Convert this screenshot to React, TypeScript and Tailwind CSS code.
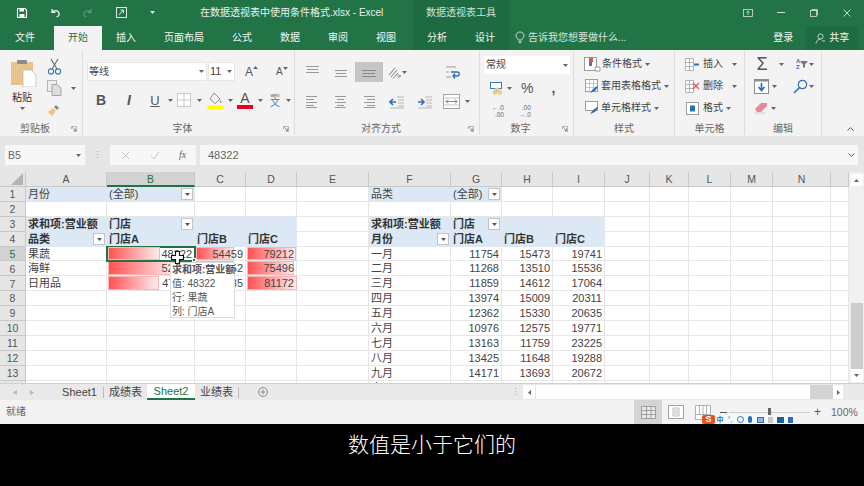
import React from "react";

const Caret = ({ c = "#666", up = false }: { c?: string; up?: boolean }) => (
  <svg width="5" height="3" viewBox="0 0 5 3" className="shrink-0">
    <path d={up ? "M0 3L2.5 0L5 3Z" : "M0 0H5L2.5 3Z"} fill={c} />
  </svg>
);

const Lines = ({ rows, c = "#9a9a9a" }: { rows: [number, number, number][]; c?: string }) => (
  <svg width="16" height="16" viewBox="0 0 16 16">
    {rows.map((r, i) => (
      <rect key={i} x={r[0]} y={r[1]} width={r[2]} height="1" fill={c} />
    ))}
  </svg>
);

const Launcher = () => (
  <svg width="6" height="6" viewBox="0 0 6 6">
    <path d="M0.5 3V0.5H5.5V5.5H3" fill="none" stroke="#9a9a9a" strokeWidth="0.7" />
    <path d="M1 1L4.5 4.5M4.5 2.5V4.5H2.5" fill="none" stroke="#777" strokeWidth="0.7" />
  </svg>
);

const Group = ({ w, label, launcher, children }: { w: string; label: string; launcher?: boolean; children: React.ReactNode }) => (
  <div className={`${w} shrink-0 flex flex-col h-[84px] mt-[1px] border-r border-[#dcdcdc]`}>
    <div className="flex-1 min-h-0">{children}</div>
    <div
      className={`h-[12px] items-center text-[10px] leading-none text-[#666] grid ${
        launcher ? "grid-cols-[1fr_auto_1fr_12px]" : "grid-cols-[1fr_auto_1fr]"
      }`}
    >
      <span />
      <span>{label}</span>
      <span />
      {launcher ? (
        <span className="flex items-center pl-[1px]">
          <Launcher />
        </span>
      ) : null}
    </div>
  </div>
);

const GridIcon = ({ children }: { children?: React.ReactNode }) => (
  <svg width="16" height="16" viewBox="0 0 16 16" className="shrink-0">
    <rect x="1.5" y="1.5" width="12" height="12" fill="#fff" stroke="#9d9d9d" />
    <path d="M1.5 5.5H13.5M1.5 9.5H13.5M5.5 1.5V13.5M9.5 1.5V13.5" stroke="#bdbdbd" strokeWidth="0.8" />
    {children}
  </svg>
);

const StyleRow = ({ icon, text }: { icon: React.ReactNode; text: string }) => (
  <div className="h-[22px] flex items-center pl-[10px]">
    {icon}
    <span className="ml-[1px] text-[10px] text-[#444] leading-none whitespace-nowrap">{text}</span>
    <span className="ml-[3px]"><Caret /></span>
  </div>
);

const CellRow = ({ icon, text, gap }: { icon: React.ReactNode; text: string; gap: string }) => (
  <div className="h-[22px] flex items-center pl-[10px]">
    {icon}
    <span className="ml-[3px] text-[10px] text-[#444] leading-none whitespace-nowrap">{text}</span>
    <span className={gap}><Caret /></span>
  </div>
);

const colNames = ["A", "B", "C", "D", "E", "F", "G", "H", "I", "J", "K", "L", "M", "N", ""];

const DropBtn = () => (
  <span className="ml-auto mr-[1px] w-[12px] h-[12px] shrink-0 bg-white border border-[#c4c4c4] flex items-center justify-center">
    <Caret c="#555" />
  </span>
);

const Bold = ({ t }: { t: string }) => <span className="font-bold text-[#333] whitespace-nowrap">{t}</span>;

const blue = new Set([
  "A1", "B1", "F1", "G1",
  "A3", "B3", "C3", "D3", "A4", "B4", "C4", "D4",
  "F3", "G3", "H3", "I3", "F4", "G4", "H4", "I4",
]);

const cellText: Record<string, React.ReactNode> = {
  A1: "月份",
  B1: <>(全部)<DropBtn /></>,
  A3: <Bold t="求和项:营业额" />,
  B3: <><Bold t="门店" /><DropBtn /></>,
  A4: <><Bold t="品类" /><DropBtn /></>,
  B4: <Bold t="门店A" />,
  C4: <Bold t="门店B" />,
  D4: <Bold t="门店C" />,
  A5: "果蔬",
  A6: "海鲜",
  A7: "日用品",
  F1: "品类",
  G1: <>(全部)<DropBtn /></>,
  F3: <Bold t="求和项:营业额" />,
  G3: <><Bold t="门店" /><DropBtn /></>,
  F4: <><Bold t="月份" /><DropBtn /></>,
  G4: <Bold t="门店A" />,
  H4: <Bold t="门店B" />,
  I4: <Bold t="门店C" />,
};

const months = ["一月", "二月", "三月", "四月", "五月", "六月", "七月", "八月", "九月", "十月"];
months.forEach((m, i) => {
  cellText[`F${i + 5}`] = m;
});

const nums: Record<string, string> = {
  B5: "48322", C5: "54459", D5: "79212",
  B6: "52106", C6: "50952", D6: "75496",
  B7: "47311", C7: "41235", D7: "81172",
  G5: "11754", H5: "15473", I5: "19741",
  G6: "11268", H6: "13510", I6: "15536",
  G7: "11859", H7: "14612", I7: "17064",
  G8: "13974", H8: "15009", I8: "20311",
  G9: "12362", H9: "15330", I9: "20635",
  G10: "10976", H10: "12575", I10: "19771",
  G11: "13163", H11: "11759", I11: "23225",
  G12: "13425", H12: "11648", I12: "19288",
  G13: "14171", H13: "13693", I13: "20672",
};

const bars: Record<string, number> = { B5: 52, B6: 66, B7: 51, C5: 38, C6: 38, C7: 38, D5: 49, D6: 47, D7: 50 };

const Tab = ({ t }: { t: string }) => <span className="text-[10px] leading-none text-[#f2f7f4] whitespace-nowrap">{t}</span>;

const Sep = () => <span className="w-[1px] h-[11px] bg-[#bbb] shrink-0" />;

export default function App() {
  const rowNums = Array.from({ length: 14 }, (_, i) => i + 1);
  return (
    <div className="w-[864px] h-[486px] overflow-hidden flex flex-col bg-black font-['Liberation_Sans','Noto_Sans_CJK_SC',sans-serif]">
      {/* title bar */}
      <div className="h-[25px] shrink-0 bg-[#227447] flex items-stretch text-[#eaf2ed]">
        <div className="w-[200px] shrink-0 flex items-center">
          <svg width="12" height="12" viewBox="0 0 12 12" className="ml-[16px]">
            <path d="M1.5 1.5H9L10.5 3V10.5H1.5Z" fill="none" stroke="#fff" strokeWidth="1.1" />
            <rect x="3.5" y="1.5" width="4.5" height="3" fill="#fff" />
            <rect x="3.5" y="7" width="5" height="3.5" fill="#fff" />
          </svg>
          <svg width="12" height="12" viewBox="0 0 12 12" className="ml-[21px]">
            <path d="M3 2V5.5H6.5M3 5.5C5 3 9 3 10 6C10.5 8 9 9.5 7.5 10" fill="none" stroke="#fff" strokeWidth="1.2" />
          </svg>
          <svg width="12" height="12" viewBox="0 0 12 12" className="ml-[21px] opacity-30">
            <path d="M9 2V5.5H5.5M9 5.5C7 3 3 3 2 6C1.5 8 3 9.5 4.5 10" fill="none" stroke="#fff" strokeWidth="1.1" />
          </svg>
          <svg width="13" height="13" viewBox="0 0 13 13" className="ml-[21px]">
            <rect x="1.5" y="1.5" width="10" height="10" fill="none" stroke="#dfe9e3" strokeWidth="1" />
            <path d="M4 9L8.5 4M5.5 4H8.5V7" fill="none" stroke="#dfe9e3" strokeWidth="1" />
          </svg>
          <span className="ml-[22px]"><Caret c="#dfe9e3" /></span>
        </div>
        <div className="w-[213px] shrink-0 flex items-center text-[10px] leading-none whitespace-nowrap">在数据透视表中使用条件格式.xlsx - Excel</div>
        <div className="w-[96px] shrink-0 bg-[#1f6b41] flex items-center justify-center text-[10px] text-[#cfe0d6] leading-none">数据透视表工具</div>
        <div className="flex-1 flex items-center">
          <svg width="10" height="8" viewBox="0 0 10 8" className="ml-[234px]">
            <rect x="0.5" y="0.5" width="9" height="7" fill="none" stroke="#d5e2da" strokeWidth="0.8" />
            <path d="M5 2V6M3.5 3.5L5 2L6.5 3.5" fill="none" stroke="#d5e2da" strokeWidth="0.8" />
          </svg>
          <svg width="8" height="2" viewBox="0 0 8 2" className="ml-[24px]"><rect width="8" height="1" fill="#d5e2da" /></svg>
          <svg width="8" height="8" viewBox="0 0 8 8" className="ml-[25px]">
            <rect x="0.5" y="1.5" width="6" height="6" fill="none" stroke="#d5e2da" strokeWidth="0.8" />
            <path d="M2 1V0.5H7.5V6H7" fill="none" stroke="#d5e2da" strokeWidth="0.8" />
          </svg>
          <svg width="8" height="8" viewBox="0 0 8 8" className="ml-[25px]">
            <path d="M0.5 0.5L7.5 7.5M7.5 0.5L0.5 7.5" stroke="#d5e2da" strokeWidth="0.9" />
          </svg>
        </div>
      </div>
      {/* tabs */}
      <div className="h-[25px] shrink-0 bg-[#227447] flex items-stretch">
        <div className="flex items-center gap-[28px] pl-[15px] w-[413px] shrink-0">
          <Tab t="文件" />
          <div className="-ml-[9px] -mr-[14px] w-[48px] h-[24px] self-end bg-[#f3f3f3] flex items-center justify-center text-[10px] text-[#217346] leading-none">开始</div>
          <Tab t="插入" />
          <Tab t="页面布局" />
          <Tab t="公式" />
          <Tab t="数据" />
          <Tab t="审阅" />
          <Tab t="视图" />
        </div>
        <div className="w-[96px] shrink-0 bg-[#1f6b41] flex items-center justify-center gap-[28px]">
          <Tab t="分析" />
          <Tab t="设计" />
        </div>
        <div className="flex-1 flex items-center">
          <svg width="10" height="13" viewBox="0 0 10 13" className="ml-[6px]">
            <path d="M3.3 9C3 7.5 1 6.8 1 4.6C1 2.5 2.8 1 5 1S9 2.5 9 4.6C9 6.8 7 7.5 6.7 9ZM3.5 10.5H6.5M4 12H6" fill="none" stroke="#e4eee8" strokeWidth="0.8" />
          </svg>
          <span className="ml-[3px] text-[10px] leading-none text-[#d5e4db] whitespace-nowrap">告诉我您想要做什么...</span>
          <span className="ml-[147px] flex items-center"><Tab t="登录" /></span>
          <div className="ml-[13px] w-[52px] h-[24px] self-end bg-[#1f6b41] flex items-center justify-center gap-[4px]">
            <svg width="10" height="11" viewBox="0 0 10 11">
              <circle cx="5.5" cy="3.5" r="2.6" fill="none" stroke="#e4eee8" strokeWidth="0.8" />
              <path d="M1 10.5C1.3 8 3 6.2 5.5 6.2M7 8H10" fill="none" stroke="#e4eee8" strokeWidth="0.8" />
            </svg>
            <Tab t="共享" />
          </div>
        </div>
      </div>
      {/* ribbon */}
      <div className="h-[86px] shrink-0 bg-[#f3f3f3] flex items-start">
        <Group w="w-[83px]" label="剪贴板" launcher>
          <div className="flex">
            <div className="w-[44px] flex flex-col items-center pt-[8px]">
              <svg width="28" height="28" viewBox="0 0 28 28" className="ml-[4px]">
                <rect x="1" y="3" width="22" height="23" fill="#e7c48c" />
                <rect x="7" y="1" width="10" height="4" rx="1" fill="#8b8b8b" />
                <path d="M13 11H21L26 16V28H13Z" fill="#fff" stroke="#b5b5b5" strokeWidth="0.7" />
              </svg>
              <span className="mt-[4px] text-[10px] leading-[14px] text-[#333]">粘贴</span>
              <span className="mt-[2px]"><Caret /></span>
            </div>
            <div className="pt-[4px] flex flex-col">
              <div className="h-[22px] flex items-center ml-[3px]">
                <svg width="15" height="17" viewBox="0 0 15 17">
                  <path d="M4 1L10 11M11 1L5 11" stroke="#6a6a6a" strokeWidth="1.1" />
                  <circle cx="4" cy="13.5" r="2.6" fill="none" stroke="#3f78b8" strokeWidth="1.1" />
                  <circle cx="11" cy="13.5" r="2.6" fill="none" stroke="#3f78b8" strokeWidth="1.1" />
                </svg>
              </div>
              <div className="h-[22px] flex items-center ml-[3px]">
                <svg width="15" height="16" viewBox="0 0 15 16">
                  <rect x="0.5" y="0.5" width="9" height="11" fill="#eee" stroke="#b5b5b5" />
                  <path d="M5 4.5H10L14 8V15.5H5Z" fill="#ddd" stroke="#a5a5a5" />
                </svg>
                <span className="ml-[9px]"><Caret /></span>
              </div>
              <div className="h-[22px] flex items-center ml-[3px]">
                <svg width="14" height="14" viewBox="0 0 14 14">
                  <path d="M1 9L6 5L9 8L5 13Z" fill="#eec37a" />
                  <path d="M7 4L9 2L12 5L10 7Z" fill="#8a8a8a" />
                </svg>
              </div>
            </div>
          </div>
        </Group>
        <Group w="w-[212px]" label="字体" launcher>
          <div className="mt-[11px] ml-[4px] flex items-center h-[19px]">
            <div className="w-[120px] h-[19px] bg-white flex items-center pr-[2px] border border-[#e6e6e6]">
              <span className="text-[10px] text-[#444] pl-[1px] leading-none">等线</span>
              <span className="ml-auto"><Caret /></span>
            </div>
            <div className="ml-[1px] w-[27px] h-[19px] bg-white flex items-center pr-[2px] border border-[#e6e6e6]">
              <span className="text-[11px] text-[#444] pl-[1px] leading-none">11</span>
              <span className="ml-auto"><Caret /></span>
            </div>
            <span className="ml-[10px] flex items-start text-[#555] text-[12px] leading-none">A<Caret up /></span>
            <span className="ml-[18px] flex items-start text-[#555] text-[10px] leading-none">A<Caret /></span>
          </div>
          <div className="mt-[8px] ml-[4px] flex items-center h-[22px]">
            <span className="w-[28px] text-center text-[14px] font-bold text-[#555] leading-none">B</span>
            <span className="w-[28px] text-center text-[14px] font-bold italic text-[#555] leading-none">I</span>
            <span className="w-[24px] text-center text-[13px] text-[#555] underline leading-none">U</span>
            <span className="w-[6px] flex justify-center"><Caret /></span>
            <span className="w-[22px] flex justify-center">
              <svg width="14" height="14" viewBox="0 0 14 14">
                <rect x="0.5" y="0.5" width="13" height="13" fill="#fff" stroke="#c9c9c9" />
                <path d="M7 0.5V13.5M0.5 7H13.5" stroke="#c9c9c9" />
              </svg>
            </span>
            <span className="w-[8px] flex justify-center"><Caret /></span>
            <span className="w-[24px] flex justify-center">
              <svg width="17" height="17" viewBox="0 0 17 17">
                <path d="M7 1L13 7L8 11.5L3 7Z" fill="#f4f4f4" stroke="#8d8d8d" />
                <path d="M13.5 8C14.5 9.5 14.5 11 13.5 11S12.5 9.5 13.5 8Z" fill="#8d8d8d" />
                <rect x="0.5" y="13.5" width="16" height="3.5" fill="#ffff00" />
              </svg>
            </span>
            <span className="w-[6px] flex justify-center"><Caret /></span>
            <span className="w-[24px] flex flex-col items-center">
              <span className="text-[14px] leading-[12px] text-[#555]">A</span>
              <span className="mt-[1px] w-[16px] h-[4px] bg-[#e8001c]" />
            </span>
            <span className="w-[6px] flex justify-center"><Caret /></span>
            <span className="w-[24px] flex flex-col items-center leading-none">
              <span className="text-[5px] text-[#555]">wén</span>
              <span className="text-[10px] text-[#4a7fb8]">文</span>
            </span>
            <span className="w-[3px] flex justify-center"><Caret /></span>
          </div>
        </Group>
        <Group w="w-[185px]" label="对齐方式" launcher>
          <div className="flex pl-[4px]">
            <div className="w-[140px] flex flex-col">
              <div className="mt-[11px] flex items-center h-[20px]">
                <span className="w-[28px] flex justify-center"><Lines rows={[[1, 2, 13], [2, 5, 11], [1, 8, 13]]} /></span>
                <span className="w-[28px] flex justify-center"><Lines rows={[[2, 6, 12], [3, 9, 10], [2, 12, 12]]} /></span>
                <span className="w-[28px] h-[20px] bg-[#c6c6c6] flex justify-center items-center"><Lines c="#8a8a8a" rows={[[1, 6, 14], [2, 9, 12], [1, 12, 14]]} /></span>
                <span className="w-[28px] flex items-center justify-center gap-[1px]">
                  <svg width="13" height="13" viewBox="0 0 13 13">
                    <path d="M1 9L7 2M3 11L9 4M5 12.5L10 7" stroke="#777" strokeWidth="1" />
                    <path d="M9 10H12.5M11 8.5L12.5 10L11 11.5" fill="none" stroke="#4a7fb8" strokeWidth="0.8" />
                  </svg>
                  <Caret />
                </span>
              </div>
              <div className="mt-[10px] flex items-center h-[20px]">
                <span className="w-[28px] flex justify-center"><Lines rows={[[1, 2, 11], [1, 5, 8], [1, 8, 11], [1, 11, 8], [1, 13, 11]]} /></span>
                <span className="w-[28px] flex justify-center"><Lines rows={[[2, 2, 11], [4, 5, 7], [2, 8, 11], [4, 11, 7], [2, 13, 11]]} /></span>
                <span className="w-[28px] flex justify-center"><Lines rows={[[3, 2, 11], [6, 5, 8], [3, 8, 11], [6, 11, 8], [3, 13, 11]]} /></span>
                <span className="w-[28px] flex justify-center">
                  <svg width="16" height="14" viewBox="0 0 16 14">
                    <path d="M7 7H1M4 4L1 7L4 10" fill="none" stroke="#2f6fb5" strokeWidth="1.6" />
                    <path d="M8 2H15M9 5H15M9 8H15M9 11H15M1 13H15" stroke="#a5a5a5" strokeWidth="0.8" />
                  </svg>
                </span>
                <span className="w-[28px] flex justify-center">
                  <svg width="16" height="14" viewBox="0 0 16 14">
                    <path d="M1 7H7M4 4L7 7L4 10" fill="none" stroke="#2f6fb5" strokeWidth="1.6" />
                    <path d="M8 2H15M9 5H15M9 8H15M9 11H15M1 13H15" stroke="#a5a5a5" strokeWidth="0.8" />
                  </svg>
                </span>
              </div>
            </div>
            <div className="flex flex-col">
              <div className="h-[22px] mt-[10px] flex items-center pl-[6px]">
                <svg width="16" height="16" viewBox="0 0 16 16">
                  <path d="M1 3H11M1 8H4M1 13H6" stroke="#9a9a9a" strokeWidth="1.2" />
                  <path d="M6 8H12C15 8 15 12 12 12H8M10 9.5L8 12L10 14.5" fill="none" stroke="#2f6fb5" strokeWidth="1.3" />
                </svg>
              </div>
              <div className="h-[20px] mt-[8px] flex items-center pl-[4px]">
                <svg width="17" height="15" viewBox="0 0 17 15">
                  <rect x="0.5" y="0.5" width="16" height="14" fill="#fff" stroke="#a5a5a5" />
                  <path d="M0.5 4H16.5M0.5 11H16.5" stroke="#c4c4c4" />
                  <path d="M3 7.5H14M5 5.5L3 7.5L5 9.5M12 5.5L14 7.5L12 9.5" fill="none" stroke="#2f6fb5" strokeWidth="0.8" />
                </svg>
                <span className="ml-[5px]"><Caret /></span>
              </div>
            </div>
          </div>
        </Group>
        <Group w="w-[94px]" label="数字" launcher>
          <div className="ml-[4px] mt-[5px] w-[86px] h-[18px] bg-white flex items-center pr-[2px]">
            <span className="text-[10px] pl-[2px] text-[#444] leading-none">常规</span>
            <span className="ml-auto"><Caret /></span>
          </div>
          <div className="mt-[3px] h-[22px] flex items-center pl-[10px]">
            <svg width="14" height="14" viewBox="0 0 14 14">
              <rect x="0.5" y="1.5" width="11" height="6" fill="#fff" stroke="#3d79bb" />
              <circle cx="7" cy="9" r="2.4" fill="#e5c48e" />
              <circle cx="10" cy="11.5" r="2.4" fill="#eccf9f" />
              <circle cx="5" cy="11.5" r="2.2" fill="#e5c48e" />
            </svg>
            <span className="ml-[3px]"><Caret /></span>
            <span className="ml-[9px] text-[14px] leading-none text-[#555]">%</span>
            <span className="ml-[18px] text-[14px] font-bold leading-none text-[#555]">,</span>
          </div>
          <div className="mt-[1px] h-[22px] flex items-center pl-[12px] gap-[15px]">
            <span className="flex flex-col items-end text-[6.5px] leading-[7px] text-[#666]">
              <span><span className="text-[#2f6fb5]">←</span>.0</span>
              <span>.00</span>
            </span>
            <span className="flex flex-col items-end text-[6.5px] leading-[7px] text-[#666]">
              <span>.00</span>
              <span><span className="text-[#2f6fb5]">→</span>.0</span>
            </span>
          </div>
        </Group>
        <Group w="w-[101px]" label="样式">
          <div className="pt-[2px]">
            <StyleRow
              text="条件格式"
              icon={
                <svg width="17" height="16" viewBox="0 0 17 16" className="shrink-0">
                  <rect x="0.5" y="1.5" width="12" height="13" fill="#fff" stroke="#9d9d9d" />
                  <rect x="5" y="2" width="4" height="4" fill="#d9534f" />
                  <rect x="5" y="6" width="3" height="4" fill="#3d79bb" />
                  <path d="M11 11H16V15H11Z" fill="#fff" stroke="#777" strokeWidth="0.7" />
                </svg>
              }
            />
            <StyleRow
              text="套用表格格式"
              icon={
                <GridIcon>
                  <path d="M6 15L9 11L13 8L14 9L11 13Z" fill="#2f6fb5" />
                </GridIcon>
              }
            />
            <StyleRow
              text="单元格样式"
              icon={
                <svg width="16" height="16" viewBox="0 0 16 16" className="shrink-0">
                  <rect x="1.5" y="1.5" width="12" height="9" fill="#fff" stroke="#9d9d9d" />
                  <path d="M6 14L9 10L13 7L14 8L11 12Z" fill="#2f6fb5" />
                </svg>
              }
            />
          </div>
        </Group>
        <Group w="w-[70px]" label="单元格">
          <div className="pt-[2px]">
            <CellRow
              text="插入"
              gap="ml-[9px]"
              icon={
                <svg width="15" height="15" viewBox="0 0 15 15" className="shrink-0">
                  <path d="M0.5 1.5H8.5V13.5H0.5ZM0.5 5.5H8.5M0.5 9.5H8.5M4.5 1.5V13.5" fill="#fff" stroke="#a5a5a5" strokeWidth="0.8" />
                  <path d="M9 7.5H14" stroke="#2f6fb5" strokeWidth="2" />
                </svg>
              }
            />
            <CellRow
              text="删除"
              gap="ml-[9px]"
              icon={
                <svg width="15" height="15" viewBox="0 0 15 15" className="shrink-0">
                  <path d="M0.5 1.5H8.5V13.5H0.5ZM0.5 5.5H8.5M0.5 9.5H8.5M4.5 1.5V13.5" fill="#fff" stroke="#a5a5a5" strokeWidth="0.8" />
                  <path d="M8 4L14 10M14 4L8 10" stroke="#d9534f" strokeWidth="1.1" />
                </svg>
              }
            />
            <CellRow
              text="格式"
              gap="ml-[3px]"
              icon={
                <svg width="15" height="15" viewBox="0 0 15 15" className="shrink-0">
                  <rect x="1.5" y="1.5" width="12" height="12" fill="#fff" stroke="#9d9d9d" />
                  <rect x="5" y="4.5" width="5" height="6" fill="#2f6fb5" />
                </svg>
              }
            />
          </div>
        </Group>
        <Group w="w-[77px]" label="编辑">
          <div className="pt-[2px] pl-[9px]">
            <div className="h-[22px] flex items-center">
              <span className="w-[16px] text-[18px] leading-none text-[#555] text-center">Σ</span>
              <span className="ml-[9px]"><Caret /></span>
              <span className="ml-[12px] flex flex-col text-[6px] leading-[6px] text-[#2f6fb5] font-bold"><span>A</span><span>Z</span></span>
              <svg width="8" height="8" viewBox="0 0 8 8"><path d="M0 1H8L5 4.5V7.5H3V4.5Z" fill="#777" /></svg>
              <span className="ml-[1px]"><Caret /></span>
            </div>
            <div className="h-[22px] flex items-center">
              <svg width="15" height="15" viewBox="0 0 15 15">
                <rect x="0.5" y="0.5" width="14" height="14" fill="#fff" stroke="#8d8d8d" />
                <rect x="0.5" y="0.5" width="14" height="2" fill="#8d8d8d" />
                <path d="M7.5 4V11M4.5 8L7.5 11.5L10.5 8" fill="none" stroke="#2f6fb5" strokeWidth="1.7" />
              </svg>
              <span className="ml-[3px]"><Caret /></span>
              <svg width="15" height="15" viewBox="0 0 15 15" className="ml-[16px]">
                <circle cx="9.5" cy="5.5" r="4.2" fill="none" stroke="#2f6fb5" strokeWidth="1.2" />
                <path d="M6.5 8.5L1 14" stroke="#2f6fb5" strokeWidth="1.6" />
              </svg>
              <span className="ml-[1px]"><Caret /></span>
            </div>
            <div className="h-[22px] flex items-center">
              <svg width="14" height="12" viewBox="0 0 14 12">
                <path d="M1 7L7 1H13V4L7 10H3Z" fill="#e8899a" />
                <path d="M1 11H11" stroke="#bbb" strokeWidth="0.7" />
              </svg>
              <span className="ml-[3px]"><Caret /></span>
            </div>
          </div>
        </Group>
        <div className="flex-1 h-[84px] flex items-end justify-end pr-[10px] pb-[3px]">
          <svg width="7" height="4" viewBox="0 0 7 4"><path d="M0.5 3.5L3.5 0.7L6.5 3.5" fill="none" stroke="#555" strokeWidth="1" /></svg>
        </div>
      </div>
      {/* formula bar */}
      <div className="h-[36px] shrink-0 bg-[#e6e6e6] pt-[9px]">
        <div className="h-[20px] flex items-stretch">
          <div className="ml-[5px] w-[80px] bg-[#f7f7f7] flex items-center pl-[3px] pr-[4px]">
            <span className="text-[10.5px] text-[#666] leading-none">B5</span>
            <span className="ml-auto"><Caret /></span>
          </div>
          <div className="w-[25px] flex items-center justify-center text-[9px] leading-none text-[#999]">⋮</div>
          <div className="w-[86px] bg-[#f7f7f7] flex items-center">
            <svg width="9" height="9" viewBox="0 0 9 9" className="ml-[11px]"><path d="M1 1L8 8M8 1L1 8" stroke="#c2c2c2" strokeWidth="1" /></svg>
            <svg width="10" height="9" viewBox="0 0 10 9" className="ml-[20px]"><path d="M1 5L4 8L9 1" fill="none" stroke="#c2c2c2" strokeWidth="1" /></svg>
            <span className="ml-[19px] text-[10px] italic text-[#666] font-['Liberation_Serif',serif] leading-none">fx</span>
          </div>
          <div className="ml-[4px] w-[658px] bg-[#f7f7f7] flex items-center pl-[8px] pr-[3px]">
            <span className="text-[11px] text-[#666] leading-none">48322</span>
            <svg width="7" height="4" viewBox="0 0 7 4" className="ml-auto"><path d="M0.5 0.5L3.5 3.3L6.5 0.5" fill="none" stroke="#555" strokeWidth="1" /></svg>
          </div>
        </div>
      </div>
      {/* sheet */}
      <div className="h-[211px] shrink-0 flex bg-white">
        <div className="relative w-[849px] h-[211px] overflow-hidden">
          <div className="grid grid-cols-[26px_81px_88px_51px_51px_72px_82px_51px_51px_52px_45px_39px_42px_42px_58px_18px] grid-rows-[15px] auto-rows-[14.9px]">
            <div className="bg-[#e6e6e6] border-r border-b border-[#c8c8c8] flex items-end justify-end pr-[2px] pb-[1px]">
              <svg width="12" height="12" viewBox="0 0 12 12"><path d="M12 0V12H0Z" fill="#b4b4b4" /></svg>
            </div>
            {colNames.map((c, i) => (
              <div
                key={i}
                className={
                  c === "B"
                    ? "bg-[#d2d2d2] border-b-2 border-b-[#217346] border-r border-r-[#c8c8c8] flex items-center justify-center pt-[1px] text-[10.5px] leading-none text-[#217346]"
                    : "bg-[#e6e6e6] border-r border-b border-[#c8c8c8] flex items-center justify-center pt-[1px] text-[10.5px] leading-none text-[#555]"
                }
              >
                {c}
              </div>
            ))}
            {rowNums.map((r) => (
              <React.Fragment key={r}>
                <div
                  className={
                    r === 5
                      ? "bg-[#d2d2d2] border-r border-b border-[#c8c8c8] flex items-center justify-center pt-[1px] text-[10.5px] leading-none text-[#217346]"
                      : "bg-[#e6e6e6] border-r border-b border-[#c8c8c8] flex items-center justify-center pt-[1px] text-[10.5px] leading-none text-[#555]"
                  }
                >
                  {r}
                </div>
                {colNames.map((c, i) => {
                  const key = `${c}${r}`;
                  const isBlue = blue.has(key);
                  const isSel = key === "B5";
                  const num = nums[key];
                  const bar = bars[key];
                  return (
                    <div
                      key={i}
                      className={`relative flex items-center pt-[1px] text-[11px] leading-none text-[#444] min-w-0 border-r border-b ${
                        isBlue ? "bg-[#dce9f5] border-[#dce9f5]" : "border-[#e6e6e6]"
                      } ${num ? "justify-end pr-[2px]" : "pl-[2px]"} ${isSel ? "outline-2 -outline-offset-1 outline-[#217346] z-10" : ""}`}
                    >
                      {bar ? (
                        <span
                          className="absolute left-[1px] top-0 bottom-0 border border-[#f7b5b5] bg-[linear-gradient(90deg,#ff5252,#ffecec)]"
                          style={{ width: bar }}
                        />
                      ) : null}
                      {num ? <span className="relative">{num}</span> : cellText[key]}
                      {isSel ? <span className="absolute -right-[2px] -bottom-[2px] w-[4px] h-[4px] bg-[#217346] border border-white" /> : null}
                    </div>
                  );
                })}
              </React.Fragment>
            ))}
          </div>
          {/* tooltip */}
          <div className="absolute z-20 left-[170px] top-[90px] w-[65px] h-[56px] bg-white border border-[#dcdcdc] text-[10px] leading-[14px] text-[#555] whitespace-nowrap pl-[1px]">
            <div className="font-bold text-[#555]">求和项:营业额</div>
            <div>值: 48322</div>
            <div>行: 果蔬</div>
            <div>列: 门店A</div>
          </div>
          {/* cursor */}
          <svg width="13" height="13" viewBox="0 0 13 13" className="absolute z-30 left-[171px] top-[79px]">
            <path d="M4.5 0.5H8.5V4.5H12.5V8.5H8.5V12.5H4.5V8.5H0.5V4.5H4.5Z" fill="#fff" stroke="#111" strokeWidth="1.2" />
          </svg>
        </div>
        <div className="w-[15px] h-[211px] bg-[#f0f0f0] flex flex-col items-center">
          <div className="mt-[2px] w-[12px] h-[12px] bg-white flex items-center justify-center"><Caret up /></div>
          <div className="flex-1 w-[12px] mt-[1px] flex flex-col justify-end">
            <div className="h-[66px] bg-[#cdcdcd]" />
          </div>
          <div className="w-[12px] h-[13px] mb-[1px] bg-white flex items-center justify-center"><Caret /></div>
        </div>
      </div>
      {/* sheet tabs */}
      <div className="h-[17px] shrink-0 bg-[#e9e9e9] border-t border-[#d0d0d0] flex items-center">
        <span className="ml-[13px]"><svg width="4" height="5" viewBox="0 0 4 5"><path d="M4 0V5L0 2.5Z" fill="#b8b8b8" /></svg></span>
        <span className="ml-[13px]"><svg width="4" height="5" viewBox="0 0 4 5"><path d="M0 0V5L4 2.5Z" fill="#b8b8b8" /></svg></span>
        <span className="ml-[22px]"><Sep /></span>
        <span className="w-[47px] text-center text-[11px] leading-none text-[#444]">Sheet1</span>
        <Sep />
        <span className="w-[43px] text-center text-[11px] leading-none text-[#444]">成绩表</span>
        <span className="w-[48px] h-[16px] self-start bg-white border-b-2 border-[#217346] flex items-center justify-center text-[11px] leading-none text-[#217346]">Sheet2</span>
        <span className="w-[43px] text-center text-[11px] leading-none text-[#444]">业绩表</span>
        <Sep />
        <svg width="10" height="10" viewBox="0 0 10 10" className="ml-[19px] shrink-0">
          <circle cx="5" cy="5" r="4.5" fill="none" stroke="#777" strokeWidth="0.8" />
          <path d="M5 2.5V7.5M2.5 5H7.5" stroke="#777" strokeWidth="0.8" />
        </svg>
        <span className="ml-[245px] w-[4px] shrink-0 flex justify-center text-[9px] leading-none text-[#aaa]">⋮</span>
        <div className="ml-[6px] w-[12px] h-[14px] shrink-0 bg-white flex items-center justify-center">
          <svg width="3" height="5" viewBox="0 0 3 5"><path d="M3 0V5L0 2.5Z" fill="#666" /></svg>
        </div>
        <div className="ml-[1px] w-[274px] h-[14px] shrink-0 bg-white" />
        <div className="w-[23px] h-[14px] shrink-0 bg-[#d4d4d4]" />
        <div className="w-[10px] h-[14px] shrink-0 bg-white flex items-center justify-center">
          <svg width="3" height="5" viewBox="0 0 3 5"><path d="M0 0V5L3 2.5Z" fill="#666" /></svg>
        </div>
      </div>
      {/* status */}
      <div className="h-[24px] shrink-0 bg-[#f3f3f3] flex items-stretch">
        <span className="ml-[6px] w-[21px] shrink-0 self-center text-[10px] leading-none text-[#666]">就绪</span>
        <div className="ml-[607px] w-[28px] shrink-0 bg-[#d4d4d4] flex items-center justify-center">
          <svg width="15" height="13" viewBox="0 0 15 13">
            <path d="M0.5 0.5H14.5V12.5H0.5ZM0.5 4.5H14.5M0.5 8.5H14.5M5.5 0.5V12.5M10 0.5V12.5" fill="#e8e8e8" stroke="#8f8f8f" strokeWidth="0.8" />
          </svg>
        </div>
        <div className="ml-[6px] w-[16px] shrink-0 flex items-center">
          <svg width="16" height="14" viewBox="0 0 16 14">
            <rect x="0.5" y="0.5" width="15" height="13" fill="#fff" stroke="#a0a0a0" />
            <path d="M5 3H11V11H5ZM6 5H10M6 7H10M6 9H10" fill="none" stroke="#a0a0a0" strokeWidth="0.7" />
          </svg>
        </div>
        <div className="ml-[11px] w-[115px] shrink-0 h-[24px] flex flex-col">
          <div className="h-[24px] shrink-0 flex items-center">
            <svg width="16" height="15" viewBox="0 0 16 15" className="shrink-0">
              <path d="M0.5 0.5H15.5V14.5H0.5ZM0.5 9.5H15.5M8 0.5V14.5M4.5 0.5V9.5M11.5 0.5V9.5" fill="#fff" stroke="#a0a0a0" strokeWidth="0.8" />
            </svg>
            <span className="ml-[9px] w-[7px] h-[1px] bg-[#555] shrink-0" />
            <span className="ml-[2px] w-[81px] h-[1px] bg-[#cfcfcf] shrink-0 flex items-center justify-center">
              <span className="w-[3px] h-[8px] bg-[#666]" />
            </span>
          </div>
          <div className="-mt-[9px] ml-[7px] w-[93px] h-[9px] shrink-0 bg-[#f6f9fc] flex items-center relative z-10">
            <span className="w-[13px] h-[9px] rounded-[2px] bg-[#e8501d] text-white text-[9px] font-bold leading-[9px] text-center">S</span>
            <span className="w-[10px] flex justify-center text-[7px] leading-none text-[#2a6fb5] font-bold">中</span>
            <span className="w-[10px] flex justify-center text-[7px] leading-none text-[#2a6fb5]">°,</span>
            <span className="w-[10px] flex justify-center"><span className="w-[7px] h-[7px] rounded-full border border-[#2a6fb5]" /></span>
            <span className="w-[10px] flex justify-center"><span className="w-[4px] h-[7px] rounded-[2px] bg-[#2a6fb5]" /></span>
            <span className="w-[10px] flex justify-center"><span className="w-[7px] h-[6px] border border-[#2a6fb5] bg-[#8fb9e0]" /></span>
            <span className="w-[10px] flex justify-center"><span className="w-[5px] h-[6px] bg-[#c8c8c8]" /></span>
            <span className="w-[10px] flex justify-center"><span className="w-[7px] h-[6px] bg-[#1f5f99]" /></span>
            <span className="w-[10px] flex justify-center"><span className="w-[5px] h-[6px] bg-[#2a6fb5]" /></span>
          </div>
        </div>
        <div className="ml-[4px] flex items-center shrink-0 whitespace-nowrap">
          <span className="w-[7px] text-center text-[12px] leading-none text-[#555]">+</span>
          <span className="ml-[10px] text-[10.5px] leading-none text-[#666]">100%</span>
        </div>
      </div>
      {/* subtitle */}
      <div className="flex-1 flex justify-center items-start pt-[8px] bg-black">
        <span className="text-[21px] leading-[26px] font-light text-white whitespace-nowrap">数值是小于它们的</span>
      </div>
    </div>
  );
}
